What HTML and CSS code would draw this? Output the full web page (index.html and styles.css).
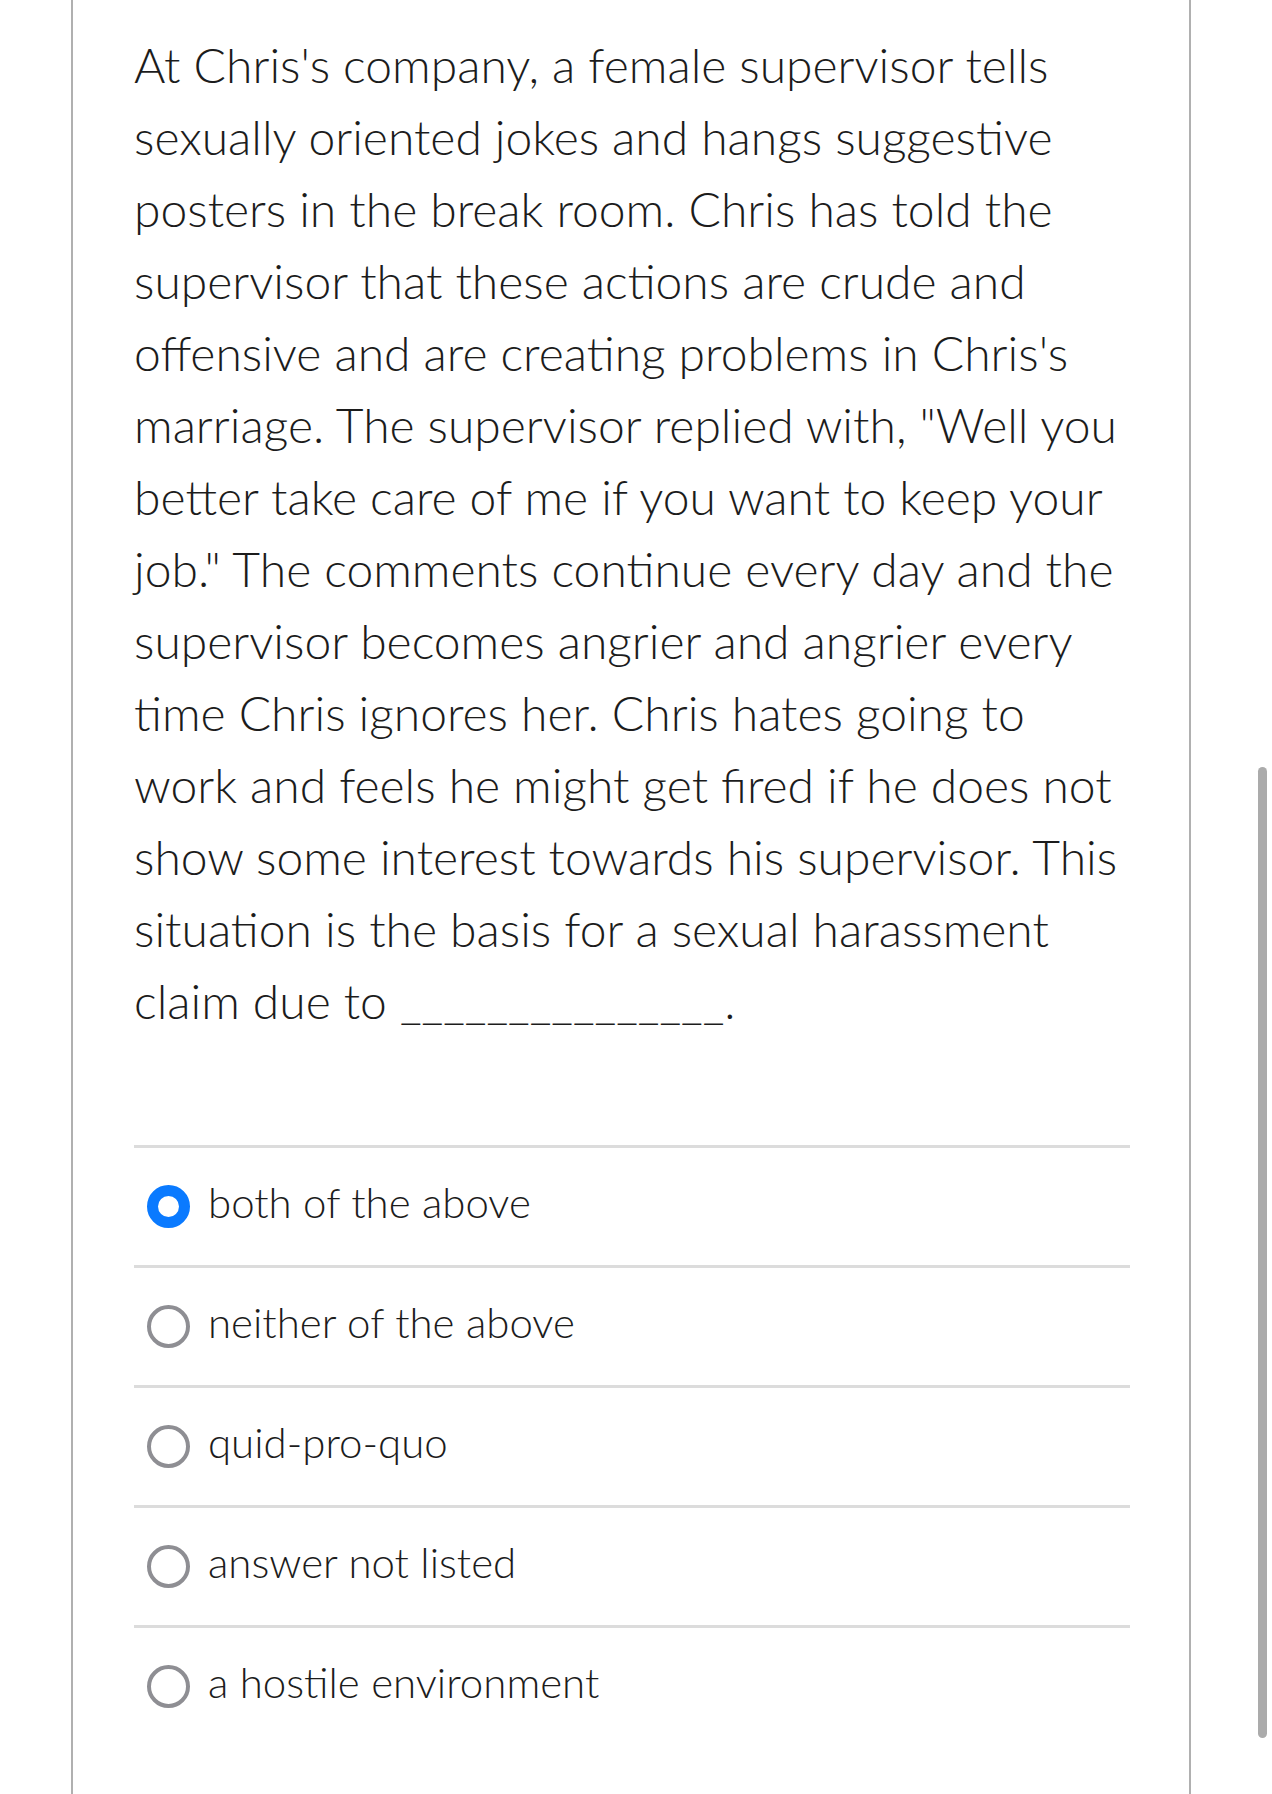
FILE: index.html
```html
<!DOCTYPE html>
<html lang="en">

<head>
  <meta charset="utf-8">
  <meta name="viewport" content="width=device-width, initial-scale=1">
  <title>question</title>
  <link rel="stylesheet" href="styles.css">
</head>

<body>

  <section class="sheet">

    <p class="question">
      At Chris's company, a female supervisor tells sexually oriented jokes and hangs suggestive
      posters in the break room. Chris has told the supervisor that these actions are crude and
      offensive and are creating problems in Chris's marriage. The supervisor replied with, "Well you
      better take care of me if you want to keep your job." The comments continue every day and the
      supervisor becomes angrier and angrier every time Chris ignores her. Chris hates going to
      work and feels he might get fired if he does not show some interest towards his supervisor. This
      situation is the basis for a sexual harassment claim due to _______________.
    </p>

    <ul class="choices">
      <li class="choice">
        <span class="radio radio-on"></span>
        <span class="choice-label">both of the above</span>
      </li>
      <li class="choice">
        <span class="radio"></span>
        <span class="choice-label">neither of the above</span>
      </li>
      <li class="choice">
        <span class="radio"></span>
        <span class="choice-label">quid-pro-quo</span>
      </li>
      <li class="choice">
        <span class="radio"></span>
        <span class="choice-label">answer not listed</span>
      </li>
      <li class="choice">
        <span class="radio"></span>
        <span class="choice-label">a hostile environment</span>
      </li>
    </ul>

  </section>

  <div class="scroll-thumb"></div>

</body>

</html>
```

FILE: styles.css
```css
/* ******************** global ******************* */

* {
  box-sizing: border-box;
}

html,
body {
  margin: 0;
  padding: 0;
  height: 100%;
  overflow: hidden;
  background-color: white;
}

body {
  font-family: "Lato Light", "Lato", "Open Sans", sans-serif;
  font-weight: 300;
  color: #1c1c1c;
}

/* ******************** sheet ******************* */

.sheet {
  width: 1120px;
  height: 100%;
  margin-left: 71px;
  padding: 29px 59px 0 61px;
  border-left: 2px solid #b0b0b0;
  border-right: 2px solid #b0b0b0;
}

.question {
  margin: 0;
  font-size: 48px;
  line-height: 72px;
}

/* ******************** choices ******************* */

.choices {
  list-style: none;
  margin: 108px 0 0 0;
  padding: 0;
}

.choice {
  display: flex;
  align-items: center;
  gap: 18px;
  height: 120px;
  padding-left: 13px;
  border-top: 3px solid #dcdcdc;
}

.choice-label {
  font-size: 42px;
  line-height: 1;
  padding-bottom: 9px;
}

.radio {
  width: 43px;
  height: 43px;
  flex: none;
  border-radius: 50%;
  border: 4px solid #8e8e93;
  background-color: white;
}

.radio-on {
  border: 11px solid #0a7aff;
}

/* ******************** scrollbar ******************* */

.scroll-thumb {
  position: absolute;
  top: 767px;
  right: 5px;
  width: 9px;
  height: 971px;
  border-radius: 5px;
  background-color: #ababab;
}
```
